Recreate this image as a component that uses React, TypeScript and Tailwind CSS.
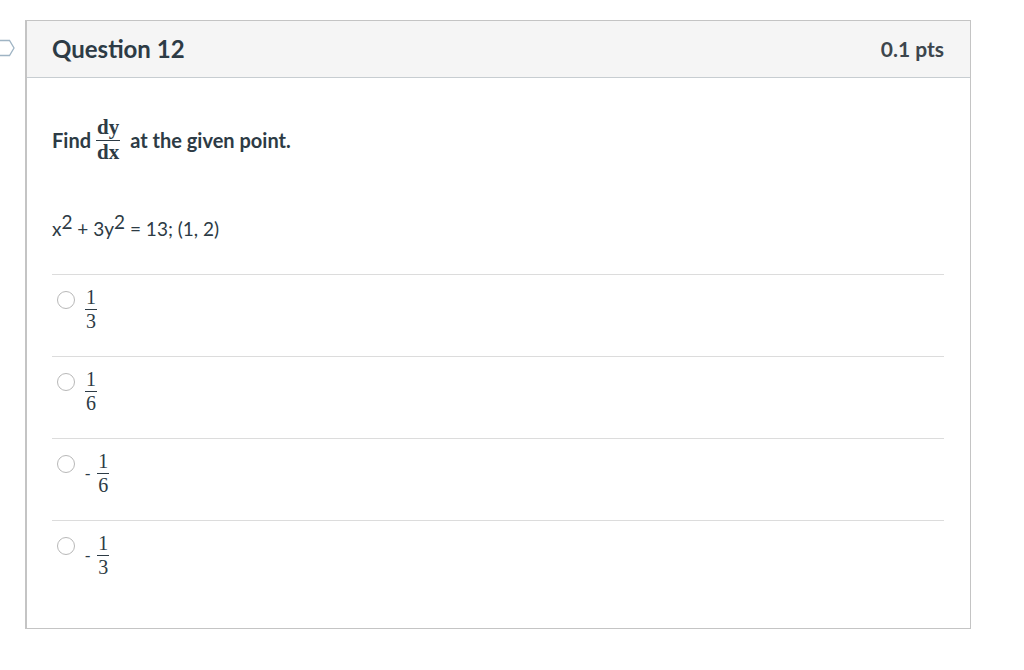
import React from "react";

const serif = "font-['Liberation_Serif','DejaVu_Serif',serif]";

function Frac({ top, bottom, bold = false, size = "text-[20px]" }: { top: string; bottom: string; bold?: boolean; size?: string }) {
  return (
    <span className={`inline-flex flex-col items-center align-middle leading-none ${serif} ${size} ${bold ? "font-bold" : ""} text-[#2d3b45]`}>
      <span className="px-[1px] pb-[2px]">{top}</span>
      <span className="self-stretch border-t-[1.5px] border-[#2d3b45]" />
      <span className="px-[1px] pt-[1px]">{bottom}</span>
    </span>
  );
}

function Radio() {
  return <span className="inline-block w-[18px] h-[18px] rounded-full border border-[#b8b8b8] bg-white shrink-0" />;
}

const answers = [
  { neg: false, den: "3" },
  { neg: false, den: "6" },
  { neg: true, den: "6" },
  { neg: true, den: "3" },
];

export default function App() {
  return (
    <div className="w-[1024px] h-[670px] bg-white font-['Lato','Liberation_Sans',sans-serif] text-[#2d3b45] relative">
      {/* bookmark flag */}
      <svg className="absolute left-0 top-[39px]" width="16" height="18" viewBox="0 0 16 18">
        <path d="M-2 1.5 H9.5 L14 9 L9.5 16.5 H-2 Z" fill="white" stroke="#9fb4c4" strokeWidth="1.3" />
      </svg>
      <div className="pt-[20px] pl-[25px]">
        <div className="w-[946px] h-[609px] border border-[#c4c4c4] border-l-2 flex flex-col">
          <div className="h-[57px] bg-[#f5f5f5] border-b border-[#c7cdd1] flex items-center justify-between pl-[25px] pr-[26px]">
            <h2 className="text-[24px] font-bold mt-[-1px]">Question 12</h2>
            <span className="text-[21px] font-bold text-[#3d464d]">0.1 pts</span>
          </div>
          <div className="px-[25px] pr-[26px]">
            <div className="mt-[42px] flex items-center gap-[5px] text-[20px] font-bold h-[40px]">
              <span>Find</span>
              <Frac top="dy" bottom="dx" bold size="text-[21px]" />
              <span className="ml-[5px]">at the given point.</span>
            </div>
            <div className="mt-[55px] text-[19px] leading-[28px]">
              x<sup className="text-[19px] relative top-[-3px] align-top leading-none">2</sup> + 3y<sup className="text-[19px] relative top-[-3px] align-top leading-none">2</sup> = 13; (1, 2)
            </div>
            <div className="mt-[31px]">
              {answers.map((a, i) => (
                <div key={i} className="h-[82px] border-t border-[#dcdcdc] flex items-start pt-[12px] pl-[5px]">
                  <div className="mt-[4px]"><Radio /></div>
                  <div className="ml-[10px] flex items-center">
                    {a.neg && <span className={`${serif} text-[16px] mr-[7px] mt-[2px]`}>-</span>}
                    <Frac top="1" bottom={a.den} />
                  </div>
                </div>
              ))}
            </div>
          </div>
        </div>
      </div>
    </div>
  );
}
